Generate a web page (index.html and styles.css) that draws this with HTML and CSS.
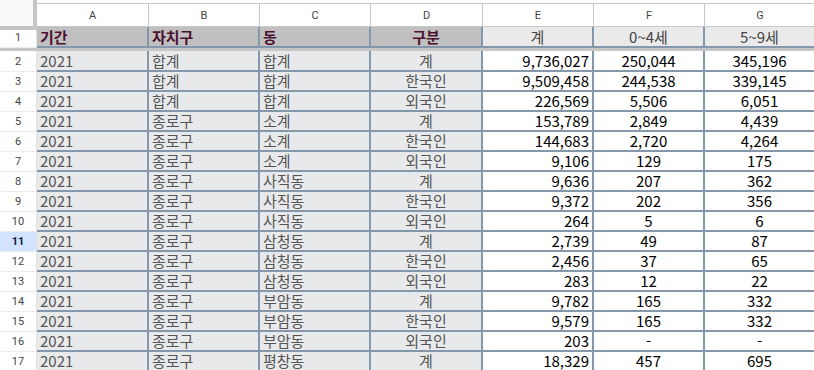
FILE: index.html
```html
<!DOCTYPE html>
<html lang="ko">
<head>
<meta charset="utf-8">
<title>Sheet</title>
<link rel="stylesheet" href="styles.css">
</head>
<body>
<div class="sheet">
  <div class="colhead">
    <div class="corner"></div>
    <div class="ch">A</div><div class="ch">B</div><div class="ch">C</div><div class="ch">D</div><div class="ch">E</div><div class="ch">F</div><div class="ch">G</div>
  </div>
  <div class="row r1">
    <div class="rh">1</div>
    <div class="c h1 l">기간</div><div class="c h1 l">자치구</div><div class="c h1 l">동</div><div class="c h1 m">구분</div>
    <div class="c h2 m">계</div><div class="c h2 m">0~4세</div><div class="c h2 m">5~9세</div>
  </div>
  <div class="freeze"></div>
  <div class="row r2">
    <div class="rh">2</div>
    <div class="c g l">2021</div><div class="c g l">합계</div><div class="c g l">합계</div><div class="c g m">계</div>
    <div class="c w r">9,736,027</div><div class="c w m">250,044</div><div class="c w m">345,196</div>
  </div>
  <div class="row">
    <div class="rh">3</div>
    <div class="c g l">2021</div><div class="c g l">합계</div><div class="c g l">합계</div><div class="c g m">한국인</div>
    <div class="c w r">9,509,458</div><div class="c w m">244,538</div><div class="c w m">339,145</div>
  </div>
  <div class="row">
    <div class="rh">4</div>
    <div class="c g l">2021</div><div class="c g l">합계</div><div class="c g l">합계</div><div class="c g m">외국인</div>
    <div class="c w r">226,569</div><div class="c w m">5,506</div><div class="c w m">6,051</div>
  </div>
  <div class="row">
    <div class="rh">5</div>
    <div class="c g l">2021</div><div class="c g l">종로구</div><div class="c g l">소계</div><div class="c g m">계</div>
    <div class="c w r">153,789</div><div class="c w m">2,849</div><div class="c w m">4,439</div>
  </div>
  <div class="row">
    <div class="rh">6</div>
    <div class="c g l">2021</div><div class="c g l">종로구</div><div class="c g l">소계</div><div class="c g m">한국인</div>
    <div class="c w r">144,683</div><div class="c w m">2,720</div><div class="c w m">4,264</div>
  </div>
  <div class="row">
    <div class="rh">7</div>
    <div class="c g l">2021</div><div class="c g l">종로구</div><div class="c g l">소계</div><div class="c g m">외국인</div>
    <div class="c w r">9,106</div><div class="c w m">129</div><div class="c w m">175</div>
  </div>
  <div class="row">
    <div class="rh">8</div>
    <div class="c g l">2021</div><div class="c g l">종로구</div><div class="c g l">사직동</div><div class="c g m">계</div>
    <div class="c w r">9,636</div><div class="c w m">207</div><div class="c w m">362</div>
  </div>
  <div class="row">
    <div class="rh">9</div>
    <div class="c g l">2021</div><div class="c g l">종로구</div><div class="c g l">사직동</div><div class="c g m">한국인</div>
    <div class="c w r">9,372</div><div class="c w m">202</div><div class="c w m">356</div>
  </div>
  <div class="row">
    <div class="rh">10</div>
    <div class="c g l">2021</div><div class="c g l">종로구</div><div class="c g l">사직동</div><div class="c g m">외국인</div>
    <div class="c w r">264</div><div class="c w m">5</div><div class="c w m">6</div>
  </div>
  <div class="row">
    <div class="rh sel">11</div>
    <div class="c g l">2021</div><div class="c g l">종로구</div><div class="c g l">삼청동</div><div class="c g m">계</div>
    <div class="c w r">2,739</div><div class="c w m">49</div><div class="c w m">87</div>
  </div>
  <div class="row">
    <div class="rh">12</div>
    <div class="c g l">2021</div><div class="c g l">종로구</div><div class="c g l">삼청동</div><div class="c g m">한국인</div>
    <div class="c w r">2,456</div><div class="c w m">37</div><div class="c w m">65</div>
  </div>
  <div class="row">
    <div class="rh">13</div>
    <div class="c g l">2021</div><div class="c g l">종로구</div><div class="c g l">삼청동</div><div class="c g m">외국인</div>
    <div class="c w r">283</div><div class="c w m">12</div><div class="c w m">22</div>
  </div>
  <div class="row">
    <div class="rh">14</div>
    <div class="c g l">2021</div><div class="c g l">종로구</div><div class="c g l">부암동</div><div class="c g m">계</div>
    <div class="c w r">9,782</div><div class="c w m">165</div><div class="c w m">332</div>
  </div>
  <div class="row">
    <div class="rh">15</div>
    <div class="c g l">2021</div><div class="c g l">종로구</div><div class="c g l">부암동</div><div class="c g m">한국인</div>
    <div class="c w r">9,579</div><div class="c w m">165</div><div class="c w m">332</div>
  </div>
  <div class="row">
    <div class="rh">16</div>
    <div class="c g l">2021</div><div class="c g l">종로구</div><div class="c g l">부암동</div><div class="c g m">외국인</div>
    <div class="c w r">203</div><div class="c w m">-</div><div class="c w m">-</div>
  </div>
  <div class="row">
    <div class="rh">17</div>
    <div class="c g l">2021</div><div class="c g l">종로구</div><div class="c g l">평창동</div><div class="c g m">계</div>
    <div class="c w r">18,329</div><div class="c w m">457</div><div class="c w m">695</div>
  </div>
</div>
</body>
</html>
```

FILE: styles.css
```css
* { box-sizing: border-box; }

body {
  margin: 0;
  background: #fff;
  font-family: "Noto Sans CJK KR", "Noto Sans", sans-serif;
  overflow: hidden;
}

.sheet {
  width: 814px;
  height: 370px;
  overflow: hidden;
}

.colhead,
.row {
  display: grid;
  grid-template-columns: 37px 112px 111px 111px 112px 111px 111px 111px;
}

.colhead { height: 27px; }

.corner {
  position: relative;
  background: #f8f9fa;
  border-right: 4px solid #c4c4c4;
}

.corner::after {
  content: "";
  position: absolute;
  left: 0;
  right: -4px;
  bottom: -3px;
  height: 4px;
  background: #c4c4c4;
}

.ch {
  margin-top: 3px;
  border-top: 1px solid #c7c7c7;
  border-bottom: 1px solid #c7c7c7;
  border-right: 1px solid #c7c7c7;
  display: flex;
  align-items: center;
  justify-content: center;
  font-family: Roboto, "Liberation Sans", sans-serif;
  font-size: 11px;
  color: #444;
}

.row { height: 20px; }
.r1, .r2 { height: 21px; }

.freeze {
  height: 3px;
  background: #c6c6c6;
}

.rh {
  background: #fff;
  border-right: 1px solid #e2e2e2;
  border-bottom: 1px solid #ececec;
  display: flex;
  align-items: center;
  justify-content: center;
  font-family: Roboto, "Liberation Sans", sans-serif;
  font-size: 11px;
  color: #444;
}

.rh.sel {
  background: #d3e3fd;
  color: #0b1c45;
  font-weight: bold;
}

.c {
  display: flex;
  align-items: flex-end;
  padding: 0 3px;
  border-right: 2px solid #8497ab;
  border-bottom: 2px solid #8497ab;
  font-size: 15px;
  line-height: 18px;
  white-space: nowrap;
}

.l { justify-content: flex-start; }
.m { justify-content: center; }
.r { justify-content: flex-end; }

.h1 {
  background: #c0c0c0;
  color: #4c1130;
  font-weight: bold;
}

.h2 {
  background: #eaeaea;
  color: #444;
}

.g {
  background: #e8e9eb;
  color: #555;
}

.w {
  background: #fff;
  color: #000;
}
```
